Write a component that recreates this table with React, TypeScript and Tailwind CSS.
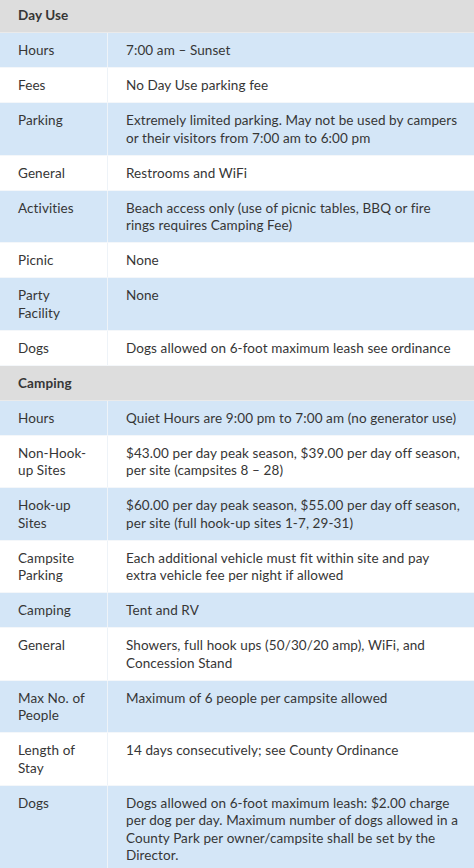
import React from "react";

type Row =
  | { type: "head"; label: string; first?: boolean }
  | { type: "row"; label: string; value: string[]; blue: boolean };

const rows: Row[] = [
  { type: "head", label: "Day Use", first: true },
  { type: "row", label: "Hours", value: ["7:00 am – Sunset"], blue: true },
  { type: "row", label: "Fees", value: ["No Day Use parking fee"], blue: false },
  { type: "row", label: "Parking", value: ["Extremely limited parking. May not be used by campers", "or their visitors from 7:00 am to 6:00 pm"], blue: true },
  { type: "row", label: "General", value: ["Restrooms and WiFi"], blue: false },
  { type: "row", label: "Activities", value: ["Beach access only (use of picnic tables, BBQ or fire", "rings requires Camping Fee)"], blue: true },
  { type: "row", label: "Picnic", value: ["None"], blue: false },
  { type: "row", label: "Party Facility", value: ["None"], blue: true },
  { type: "row", label: "Dogs", value: ["Dogs allowed on 6-foot maximum leash see ordinance"], blue: false },
  { type: "head", label: "Camping" },
  { type: "row", label: "Hours", value: ["Quiet Hours are 9:00 pm to 7:00 am (no generator use)"], blue: true },
  { type: "row", label: "Non-Hook-up Sites", value: ["$43.00 per day peak season, $39.00 per day off season,", "per site (campsites 8 – 28)"], blue: false },
  { type: "row", label: "Hook-up Sites", value: ["$60.00 per day peak season, $55.00 per day off season,", "per site (full hook-up sites 1-7, 29-31)"], blue: true },
  { type: "row", label: "Campsite Parking", value: ["Each additional vehicle must fit within site and pay", "extra vehicle fee per night if allowed"], blue: false },
  { type: "row", label: "Camping", value: ["Tent and RV"], blue: true },
  { type: "row", label: "General", value: ["Showers, full hook ups (50/30/20 amp), WiFi, and", "Concession Stand"], blue: false },
  { type: "row", label: "Max No. of People", value: ["Maximum of 6 people per campsite allowed"], blue: true },
  { type: "row", label: "Length of Stay", value: ["14 days consecutively; see County Ordinance"], blue: false },
  {
    type: "row",
    label: "Dogs",
    value: [
      "Dogs allowed on 6-foot maximum leash: $2.00 charge",
      "per dog per day. Maximum number of dogs allowed in a",
      "County Park per owner/campsite shall be set by the",
      "Director.",
    ],
    blue: true,
  },
];

export default function App() {
  return (
    <div
      className="w-[474px] bg-white text-[#363636] text-[13.5px] leading-[17.5px] tracking-[0.1px]"
      style={{ fontFamily: "Lato, 'Open Sans', sans-serif" }}
    >
      {rows.map((r, i) =>
        r.type === "head" ? (
          <div
            key={i}
            className={`bg-[#dddddd] border-b border-[#eaeaea] px-[18px] font-bold ${r.first ? "pt-[7px] pb-[7.5px]" : "pt-[9px] pb-[7.5px]"}`}
          >
            {r.label}
          </div>
        ) : (
          <div
            key={i}
            className={`grid grid-cols-[108px_1fr] border-b border-[#f4f7fa] ${r.blue ? "bg-[#d4e6f7]" : "bg-white"}`}
          >
            <div className="pl-[18px] pr-[14px] pt-[9px] pb-[7.5px] border-r border-[#eef3f8]">{r.label}</div>
            <div className="pl-[18px] pr-[6px] pt-[9px] pb-[7.5px]">
              {r.value.map((line, j) => (
                <div key={j}>{line}</div>
              ))}
            </div>
          </div>
        )
      )}
    </div>
  );
}
